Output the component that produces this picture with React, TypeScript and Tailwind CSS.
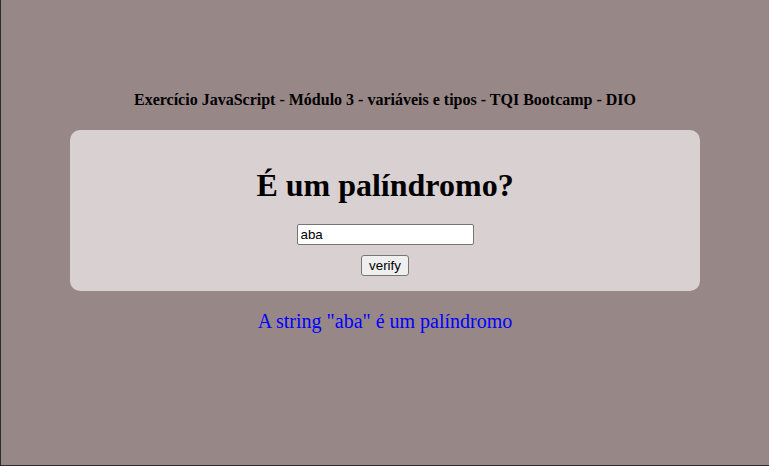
import { useState } from 'react';

function isPalindrome(text: string) {
    const clean = text.toLowerCase();
    return clean === clean.split('').reverse().join('');
}

export default function App() {
    const [word, setWord] = useState('aba');
    const [checked, setChecked] = useState('aba');

    const result = isPalindrome(checked)
        ? `A string "${checked}" é um palíndromo`
        : `A string "${checked}" não é um palíndromo`;

    return (
        <div className="h-[466px] bg-[#988787] border-l border-b border-[#2b2b2b] pt-[91px] flex flex-col items-center font-['Liberation_Serif',serif] text-black">
            <h4 className="text-base font-bold leading-[18px]">
                Exercício JavaScript - Módulo 3 - variáveis e tipos - TQI Bootcamp - DIO
            </h4>

            <div className="mt-[21px] w-[630px] rounded-[10px] bg-[#d9d0d1] pt-[37px] pb-[15px] flex flex-col items-center">
                <h1 className="text-[32px] font-bold leading-[37px]">É um palíndromo?</h1>
                <input
                    type="text"
                    value={word}
                    onChange={e => setWord(e.target.value)}
                    className="mt-[20px] w-[177px] h-[21px] px-[3px] bg-white border border-[#767676] rounded-[2px] text-[13.33px] font-['Liberation_Sans',sans-serif] outline-none"
                />
                <button
                    onClick={() => setChecked(word)}
                    className="mt-[10px] h-[21px] px-[7px] bg-[#efefef] border border-[#767676] rounded-[3px] text-[13.33px] leading-none font-['Liberation_Sans',sans-serif]"
                >
                    verify
                </button>
            </div>

            <p className="mt-[19px] text-[20px] leading-[23px] text-[#0000ff]">{result}</p>
        </div>
    );
}
